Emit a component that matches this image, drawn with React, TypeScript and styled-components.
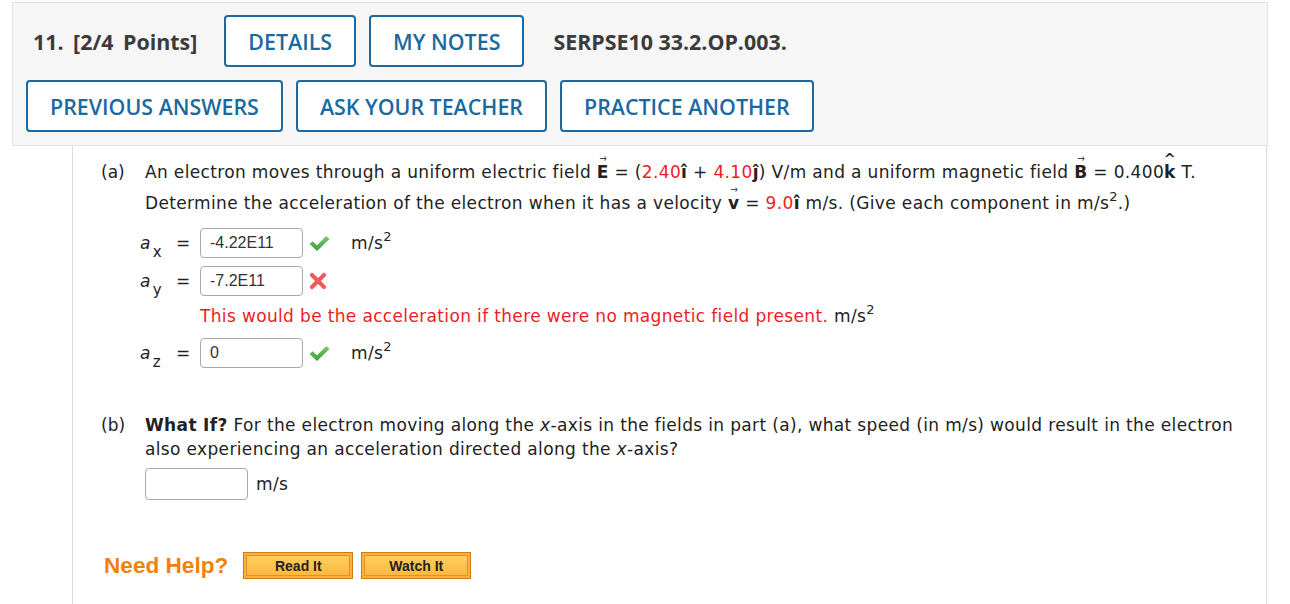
import styled, { createGlobalStyle } from "styled-components";

const GlobalStyle = createGlobalStyle`
  body {
    margin: 0;
    background: #ffffff;
    font-family: "DejaVu Sans", Verdana, sans-serif;
    color: #222;
  }
`;

const Page = styled.div`
  width: 1290px;
  height: 604px;
  overflow: hidden;
  padding: 2px 0 0 12px;
  box-sizing: border-box;
`;

const Header = styled.header`
  width: 1256px;
  box-sizing: border-box;
  background: #f6f6f6;
  border: 1px solid #e2e2e2;
  padding: 12px 0 13px 13px;
  display: flex;
  flex-direction: column;
  gap: 13px;
`;

const HeaderRow = styled.div`
  display: flex;
  align-items: center;
  gap: 13px;
`;

const QTitle = styled.div`
  font-family: "Open Sans", sans-serif;
  font-weight: 700;
  font-size: 21.4px;
  color: #3b3b3b;
  margin-left: 7px;
  margin-right: 14px;
  word-spacing: 4px;
`;

const Code = styled.div`
  font-family: "Open Sans", sans-serif;
  font-weight: 700;
  font-size: 21.4px;
  color: #3b3b3b;
  margin-left: 16px;
`;

const OutlineButton = styled.button`
  height: 52px;
  box-sizing: border-box;
  padding: 0 22px;
  background: #ffffff;
  border: 2px solid #1b6a9f;
  border-radius: 4px;
  color: #1b6a9f;
  font-family: "Open Sans", sans-serif;
  font-weight: 600;
  font-size: 21.4px;
  cursor: pointer;
`;

const Panel = styled.main`
  margin-left: 60px;
  width: 1195px;
  height: 480px;
  box-sizing: border-box;
  border-left: 1px solid #dcdcdc;
  border-right: 1px solid #dcdcdc;
  padding: 11px 0 0 28px;
  font-size: 17px;
  letter-spacing: 0.35px;
`;

const Part = styled.section<{ $gap?: number }>`
  display: flex;
  margin-top: ${(p) => p.$gap ?? 0}px;
`;

const PartLabel = styled.div<{ $h: number }>`
  width: 44px;
  flex: none;
  letter-spacing: 0;
  line-height: ${(p) => p.$h}px;
`;

const PartBody = styled.div`
  flex: 1;
`;

const Line = styled.div<{ $h: number }>`
  height: ${(p) => p.$h}px;
  line-height: ${(p) => p.$h}px;
  white-space: nowrap;
`;

const Red = styled.span`
  color: #ee1c24;
`;

const Bold = styled.b`
  font-weight: 700;
`;

const Vec = styled.b`
  position: relative;
  display: inline-block;
  line-height: 1;
  &::before {
    content: "→";
    position: absolute;
    left: 50%;
    top: -11px;
    transform: translateX(-50%) scaleX(0.8);
    font-size: 11px;
    font-weight: 400;
    color: #444;
  }
`;

const Hat = styled.b`
  position: relative;
  display: inline-block;
  line-height: 1;
  &::before {
    content: "^";
    position: absolute;
    left: 50%;
    top: -12px;
    transform: translateX(-50%);
    font-size: 14px;
    font-weight: 700;
  }
`;

const Sup = styled.sup`
  font-size: 13px;
  vertical-align: 8px;
  line-height: 0;
`;

const Answers = styled.div`
  margin-top: 9px;
  display: flex;
  flex-direction: column;
`;

const AnswerRow = styled.div<{ $mt?: number }>`
  display: flex;
  align-items: center;
  height: 30px;
  margin-top: ${(p) => p.$mt ?? 0}px;
  margin-left: -5px;
`;

const Var = styled.span`
  width: 36px;
  font-style: italic;
  font-size: 17px;
  sub {
    font-style: normal;
    font-size: 15px;
    vertical-align: -8px;
    line-height: 0;
    margin-left: 2px;
  }
`;

const Eq = styled.span`
  width: 24px;
`;

const Field = styled.input<{ $w?: number; $h?: number }>`
  width: ${(p) => p.$w ?? 103}px;
  height: ${(p) => p.$h ?? 30}px;
  box-sizing: border-box;
  border: 1px solid #a9a9a9;
  border-radius: 4px;
  padding: 0 0 0 9px;
  font-family: "Liberation Sans", Arial, sans-serif;
  font-size: 16px;
  letter-spacing: 0;
  color: #333;
  background: #fff;
`;

const Mark = styled.span`
  width: 22px;
  margin-left: 6px;
  display: flex;
  align-items: center;
`;

const Unit = styled.span`
  margin-left: 20px;
`;

const Feedback = styled.div`
  margin: 10px 0 12px 55px;
  height: 20px;
  line-height: 20px;
  color: #ee1c24;
`;

const Plain = styled.span`
  color: #222;
`;

const InlineAnswer = styled.div`
  margin-top: 7px;
  display: flex;
  align-items: center;
  gap: 8px;
`;

const Help = styled.div`
  margin: 52px 0 0 3px;
  display: flex;
  align-items: center;
  gap: 8px;
`;

const HelpLabel = styled.span`
  font-family: "Liberation Sans", Arial, sans-serif;
  font-size: 22.6px;
  font-weight: 700;
  letter-spacing: 0;
  color: #f0820c;
  margin-right: 7px;
`;

const HelpButton = styled.button`
  width: 110px;
  height: 27px;
  padding: 0;
  border: 1px solid #d27a12;
  box-shadow: inset 0 0 0 2px #fcb13e, inset 0 0 0 3px #e1912a;
  background: linear-gradient(#ffd262, #fcb53c);
  font-family: "Liberation Sans", Arial, sans-serif;
  font-weight: 700;
  font-size: 14px;
  color: #222;
  cursor: pointer;
`;

const Check = () => (
  <svg width="21" height="17" viewBox="0 0 21 17">
    <defs>
      <linearGradient id="ck" x1="0" y1="0" x2="0" y2="1">
        <stop offset="0" stopColor="#7cc96d" />
        <stop offset="1" stopColor="#3f9a3a" />
      </linearGradient>
    </defs>
    <path d="M0.5 9 L3.8 6.2 L8 10.2 L17.2 1 L20.5 4 L8 16 Z" fill="url(#ck)" />
  </svg>
);

const Cross = () => (
  <svg width="18" height="18" viewBox="0 0 18 18">
    <path
      d="M3 3 L15 15 M15 3 L3 15"
      stroke="#ef5a5a"
      strokeWidth="4.2"
      strokeLinecap="round"
    />
  </svg>
);

function App() {
  return (
    <>
      <GlobalStyle />
      <Page>
        <Header>
          <HeaderRow>
            <QTitle>11. [2/4 Points]</QTitle>
            <OutlineButton>DETAILS</OutlineButton>
            <OutlineButton>MY NOTES</OutlineButton>
            <Code>SERPSE10 33.2.OP.003.</Code>
          </HeaderRow>
          <HeaderRow>
            <OutlineButton>PREVIOUS ANSWERS</OutlineButton>
            <OutlineButton>ASK YOUR TEACHER</OutlineButton>
            <OutlineButton>PRACTICE ANOTHER</OutlineButton>
          </HeaderRow>
        </Header>

        <Panel>
          <Part>
            <PartLabel $h={31}>(a)</PartLabel>
            <PartBody>
              <Line $h={31}>
                An electron moves through a uniform electric field <Vec>E</Vec> = (
                <Red>2.40</Red>
                <Bold>î</Bold> + <Red>4.10</Red>
                <Bold>ĵ</Bold>) V/m and a uniform magnetic field <Vec>B</Vec> = 0.400
                <Hat>k</Hat> T.
              </Line>
              <Line $h={31}>
                Determine the acceleration of the electron when it has a velocity <Vec>v</Vec> ={" "}
                <Red>9.0</Red>
                <Bold>î</Bold> m/s. (Give each component in m/s<Sup>2</Sup>.)
              </Line>
              <Answers>
                <AnswerRow>
                  <Var>
                    a<sub>x</sub>
                  </Var>
                  <Eq>=</Eq>
                  <Field defaultValue="-4.22E11" />
                  <Mark>
                    <Check />
                  </Mark>
                  <Unit>
                    m/s<Sup>2</Sup>
                  </Unit>
                </AnswerRow>
                <AnswerRow $mt={8}>
                  <Var>
                    a<sub>y</sub>
                  </Var>
                  <Eq>=</Eq>
                  <Field defaultValue="-7.2E11" />
                  <Mark>
                    <Cross />
                  </Mark>
                </AnswerRow>
                <Feedback>
                  This would be the acceleration if there were no magnetic field present.{" "}
                  <Plain>
                    m/s<Sup>2</Sup>
                  </Plain>
                </Feedback>
                <AnswerRow>
                  <Var>
                    a<sub>z</sub>
                  </Var>
                  <Eq>=</Eq>
                  <Field defaultValue="0" />
                  <Mark>
                    <Check />
                  </Mark>
                  <Unit>
                    m/s<Sup>2</Sup>
                  </Unit>
                </AnswerRow>
              </Answers>
            </PartBody>
          </Part>

          <Part $gap={45}>
            <PartLabel $h={24}>(b)</PartLabel>
            <PartBody>
              <Line $h={24}>
                <Bold>What If?</Bold> For the electron moving along the <i>x</i>-axis in the fields
                in part (a), what speed (in m/s) would result in the electron
              </Line>
              <Line $h={24}>
                also experiencing an acceleration directed along the <i>x</i>-axis?
              </Line>
              <InlineAnswer>
                <Field $w={103} $h={32} />
                <span>m/s</span>
              </InlineAnswer>
            </PartBody>
          </Part>

          <Help>
            <HelpLabel>Need Help?</HelpLabel>
            <HelpButton>Read It</HelpButton>
            <HelpButton>Watch It</HelpButton>
          </Help>
        </Panel>
      </Page>
    </>
  );
}

export default App;
